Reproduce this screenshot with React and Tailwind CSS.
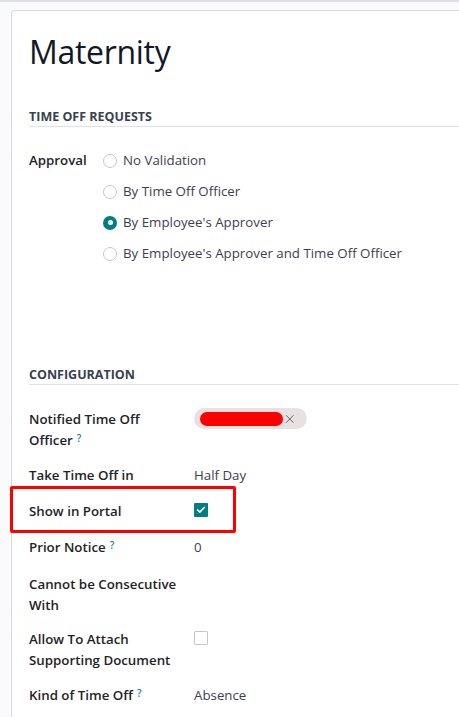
import { Check, X } from "lucide-react";

const font = { fontFamily: '"Open Sans", "Noto Sans", sans-serif' };

function Help() {
    return <sup className="ml-[4px] text-[10px] font-semibold text-[#1a7fb0] relative -top-[3px]">?</sup>;
}

function Radio({ checked, label }) {
    return (
        <label className="flex items-center h-[31px]">
            {checked ? (
                <span className="w-[14px] h-[14px] rounded-full bg-[#017e84] flex items-center justify-center">
                    <span className="w-[5px] h-[5px] rounded-full bg-white" />
                </span>
            ) : (
                <span className="w-[14px] h-[14px] rounded-full border border-[#c4c8cc] bg-white" />
            )}
            <span className="ml-[6px] text-[#3f3d4f]">{label}</span>
        </label>
    );
}

function Field({ label, children, className = "" }) {
    return (
        <div className={"flex " + className}>
            <div className="w-[165px] shrink-0 font-semibold text-[#1f2328] pr-2">{label}</div>
            <div className="flex-1 text-[#3f3d4f]">{children}</div>
        </div>
    );
}

export default function App() {
    const approvals = [
        "No Validation",
        "By Time Off Officer",
        "By Employee's Approver",
        "By Employee's Approver and Time Off Officer",
    ];

    return (
        <div className="min-h-screen bg-[#f9fafb] border-t-2 border-[#dfe1e4] overflow-hidden text-[13.3px] leading-[21px]" style={font}>
            <div className="ml-[11px] mt-[8px] bg-white border-l border-t border-[#d8dadd] rounded-tl-[4px] pl-[17px] min-h-[720px]">
                {/* Title */}
                <h1 className="pt-[18px] text-[32px] leading-[46px] text-[#111827] tracking-[-0.3px]">Maternity</h1>

                {/* Time off requests */}
                <div className="mt-[33px] border-b border-[#dee2e6] pb-[1px]">
                    <h3 className="text-[12.5px] leading-[17px] font-bold uppercase text-[#374151]">Time Off Requests</h3>
                </div>

                <div className="flex mt-[18px]">
                    <div className="w-[74px] shrink-0 font-semibold text-[#1f2328] leading-[31px]">Approval</div>
                    <div>
                        {approvals.map((a) => (
                            <Radio key={a} label={a} checked={a === "By Employee's Approver"} />
                        ))}
                    </div>
                </div>

                {/* Configuration */}
                <div className="mt-[97px] border-b border-[#dee2e6] pb-[1px]">
                    <h3 className="text-[12.5px] leading-[17px] font-bold uppercase text-[#374151]">Configuration</h3>
                </div>

                <div className="mt-[24px] pr-4">
                    <Field label={<>Notified Time Off Officer<Help /></>}>
                        <span className="inline-flex items-center h-[21px] w-[113px] rounded-full bg-[#e7e2e1] pl-[6px] pr-[10px] justify-between -mt-[1px]">
                            <span className="w-[86px] h-[14px] rounded-full bg-[#ff0000]" />
                            <X size={14} strokeWidth={1.6} className="text-[#555]" />
                        </span>
                    </Field>

                    <Field label="Take Time Off in" className="mt-[14px]">Half Day</Field>

                    <div className="-ml-[19px] w-[226px] border-[3px] border-[#ff0000] rounded-[2px] pl-[16px] pt-[12px] pb-[8px]">
                        <div className="flex">
                            <div className="w-[165px] shrink-0 font-semibold text-[#1f2328]">Show in Portal</div>
                            <span className="mt-[2px] w-[14px] h-[14px] bg-[#017e84] rounded-[1px] flex items-center justify-center">
                                <Check size={10} strokeWidth={4} className="text-white" />
                            </span>
                        </div>
                    </div>

                    <Field label={<>Prior Notice<Help /></>} className="mt-[4px]">0</Field>

                    <Field label="Cannot be Consecutive With" className="mt-[16px]"></Field>

                    <Field label="Allow To Attach Supporting Document" className="mt-[13px]">
                        <span className="block mt-[2px] w-[14px] h-[14px] border border-[#c4c8cc] rounded-[1px] bg-white" />
                    </Field>

                    <Field label={<>Kind of Time Off<Help /></>} className="mt-[14px]">Absence</Field>
                </div>
            </div>
        </div>
    );
}
